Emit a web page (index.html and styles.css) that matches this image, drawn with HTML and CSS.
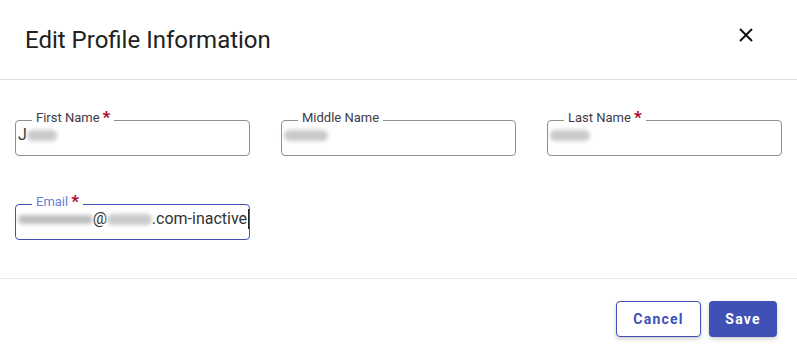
FILE: index.html
```html
<!DOCTYPE html>
<html>
<head>
<meta charset="utf-8">
<link rel="stylesheet" href="styles.css">
</head>
<body>
<div class="dialog">
  <header class="dlg-header">
    <h1 class="dlg-title">Edit Profile Information</h1>
    <button class="close-btn" aria-label="Close">
      <svg width="14" height="14" viewBox="0 0 14 14"><path d="M1 1L13 13M13 1L1 13" stroke="#111" stroke-width="2" fill="none"/></svg>
    </button>
  </header>
  <main class="dlg-body">
    <div class="grid">
      <fieldset class="field">
        <legend class="field-label">First Name<span class="req">*</span></legend>
        <div class="field-value">J<span class="blur" style="width:30px"></span></div>
      </fieldset>
      <fieldset class="field">
        <legend class="field-label">Middle Name</legend>
        <div class="field-value"><span class="blur" style="width:44px"></span></div>
      </fieldset>
      <fieldset class="field">
        <legend class="field-label">Last Name<span class="req">*</span></legend>
        <div class="field-value"><span class="blur" style="width:40px"></span></div>
      </fieldset>
      <fieldset class="field focused">
        <legend class="field-label">Email<span class="req">*</span></legend>
        <div class="field-value"><span class="blur dark" style="width:80px"></span>@<span class="blur" style="width:48px"></span>.com-inactive<span class="caret"></span></div>
      </fieldset>
    </div>
  </main>
  <footer class="dlg-footer">
    <button class="btn btn-outline">Cancel</button>
    <button class="btn btn-primary">Save</button>
  </footer>
</div>
</body>
</html>
```

FILE: styles.css
```css
html, body {
  margin: 0;
  padding: 0;
  background: #fff;
  font-family: Roboto, "Liberation Sans", Arial, sans-serif;
}
.dialog {
  width: 797px;
  height: 360px;
  display: flex;
  flex-direction: column;
}
.dlg-header {
  height: 79px;
  border-bottom: 1px solid #e0e0e0;
  display: flex;
  align-items: center;
  justify-content: space-between;
  padding: 0 40px 0 25px;
  box-sizing: content-box;
}
.dlg-title {
  margin: 0;
  font-size: 24px;
  font-weight: 400;
  color: #212121;
  letter-spacing: 0;
}
.close-btn {
  border: 0;
  background: transparent;
  padding: 0;
  width: 22px;
  height: 22px;
  display: flex;
  align-items: center;
  justify-content: center;
  cursor: pointer;
  margin-top: -10px;
}
.dlg-body {
  height: 199px;
  border-bottom: 1px solid #ebebeb;
  padding: 32px 15px 0;
  box-sizing: border-box;
}
.grid {
  display: grid;
  grid-template-columns: repeat(3, 235px);
  column-gap: 31px;
  row-gap: 40px;
}
.field {
  margin: 0;
  padding: 0 0 0 2px;
  height: 44px;
  box-sizing: border-box;
  border: 1px solid #8f8f8f;
  border-radius: 4px;
  min-width: 0;
}
.field.focused {
  border-color: #3f51b5;
}
.field-label {
  margin-left: 14px;
  padding: 0 4px;
  font-size: 13px;
  line-height: 16px;
  color: #3c3c48;
  position: relative;
  top: -2px;
}
.focused .field-label {
  color: #6b7fd7;
}
.req {
  color: #b0002a;
  font-size: 17px;
  font-weight: 700;
  margin-left: 3px;
  line-height: 10px;
  vertical-align: -1px;
}
.field-value {
  font-size: 16px;
  line-height: 20px;
  color: #333;
  display: flex;
  align-items: center;
  height: 26px;
  margin-top: -6px;
  white-space: nowrap;
}
.blur {
  display: inline-block;
  height: 11px;
  background: #c9c9c9;
  border-radius: 6px;
  filter: blur(2px);
}
.blur.dark { background: #bdbdbd; height: 9px; }
.caret {
  display: inline-block;
  width: 1px;
  height: 20px;
  background: #222;
  margin-left: 1px;
}
.dlg-footer {
  flex: 1;
  display: flex;
  justify-content: flex-end;
  align-items: flex-start;
  gap: 8px;
  padding: 22px 20px 0 0;
}
.btn {
  height: 36px;
  box-sizing: border-box;
  border-radius: 4px;
  font-family: Roboto, "Liberation Sans", Arial, sans-serif;
  font-size: 14px;
  font-weight: 700;
  letter-spacing: 1.2px;
  cursor: pointer;
  box-shadow: 0 2px 4px rgba(0,0,0,0.2);
}
.btn-outline {
  width: 85px;
  background: #fff;
  color: #3f51b5;
  border: 1px solid #3f51b5;
}
.btn-primary {
  width: 68px;
  background: #3f51b5;
  color: #fff;
  border: 0;
}
```
